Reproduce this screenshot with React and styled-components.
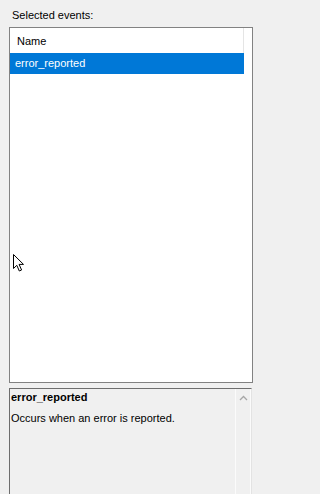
import styled, { createGlobalStyle } from 'styled-components'

const GlobalStyle = createGlobalStyle`
    html, body {
        margin: 0;
        padding: 0;
        background: #f0f0f0;
    }
    body {
        font-family: 'Liberation Sans', Arial, sans-serif;
        font-size: 11px;
        color: #000;
    }
`

const Page = styled.div`
    position: relative;
    width: 262px;
    height: 494px;
    overflow: hidden;
    display: flex;
    flex-direction: column;
    padding-left: 9px;
    box-sizing: border-box;
`

const Label = styled.div`
    padding: 9px 0 0 3px;
    line-height: 13px;
    height: 13px;
    margin-bottom: 5px;
`

const ListBox = styled.div`
    width: 244px;
    height: 356px;
    flex: none;
    box-sizing: border-box;
    border: 1px solid #828282;
    background: #fff;
`

const Header = styled.div`
    display: flex;
    height: 25px;
`

const HeaderCell = styled.div`
    width: ${p => p.$width}px;
    box-sizing: border-box;
    padding: 2px 0 0 7px;
    display: flex;
    align-items: center;
    line-height: 13px;
    border-right: 1px solid #e5e5e5;
`

const Row = styled.div`
    width: 234px;
    height: 21px;
    display: flex;
    align-items: center;
    padding-left: 5px;
    box-sizing: border-box;
    line-height: 13px;
    background: ${p => (p.$selected ? '#0078d7' : 'transparent')};
    color: ${p => (p.$selected ? '#fff' : '#000')};
`

const Description = styled.div`
    flex: 1;
    margin-top: 5px;
    width: 243px;
    box-sizing: border-box;
    display: flex;
    border-top: 1px solid #6e6e6e;
    border-left: 1px solid #6e6e6e;
    border-right: 1px solid #e3e3e3;
`

const DescBody = styled.div`
    flex: 1;
    padding: 2px 0 0 1px;
    line-height: 13px;
`

const DescTitle = styled.div`
    font-weight: bold;
`

const DescText = styled.div`
    margin-top: 8px;
`

const ScrollBar = styled.div`
    width: 16px;
    box-sizing: border-box;
    border-left: 1px solid #fbfbfb;
    border-right: 1px solid #fbfbfb;
    display: flex;
    justify-content: center;
    padding-top: 6px;
`

const Cursor = styled.svg`
    position: absolute;
    left: 13px;
    top: 254px;
`

function App() {
    return (
        <Page>
            <GlobalStyle />
            <Label>Selected events:</Label>
            <ListBox>
                <Header>
                    <HeaderCell $width={234}>Name</HeaderCell>
                </Header>
                <Row $selected>error_reported</Row>
            </ListBox>
            <Description>
                <DescBody>
                    <DescTitle>error_reported</DescTitle>
                    <DescText>Occurs when an error is reported.</DescText>
                </DescBody>
                <ScrollBar>
                    <svg width="9" height="6" viewBox="0 0 9 6">
                        <path d="M1 5 L4.5 1.5 L8 5" fill="none" stroke="#a6a6a6" strokeWidth="1.3" />
                    </svg>
                </ScrollBar>
            </Description>
            <Cursor width="13" height="19" viewBox="0 0 13 19">
                <path
                    d="M0.5 0.5 L0.5 14.5 L3.8 11.3 L6.3 17 L8.6 16 L6.1 10.4 L10.5 10.4 Z"
                    fill="#fff"
                    stroke="#000"
                    strokeWidth="1"
                    strokeLinejoin="miter"
                />
            </Cursor>
        </Page>
    )
}

export default App
